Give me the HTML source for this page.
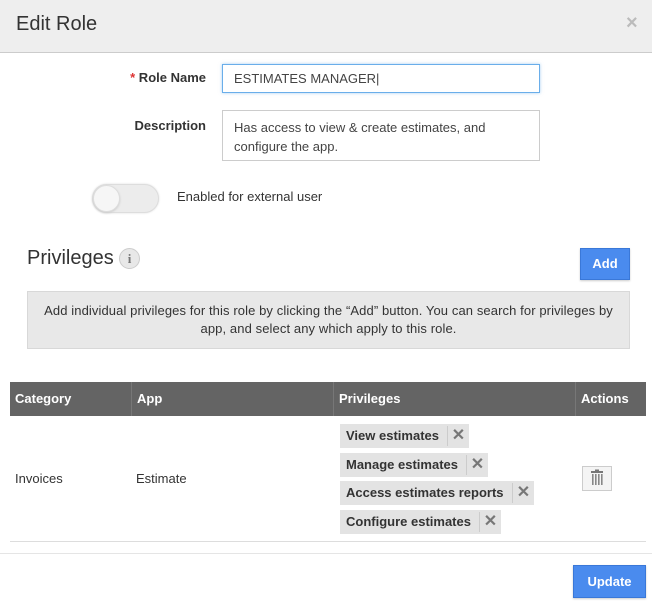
<!DOCTYPE html>
<html><head><meta charset="utf-8"><style>
*{box-sizing:border-box;margin:0;padding:0}
body{width:652px;height:609px;background:#fff;font-family:"Liberation Sans",sans-serif;color:#333;position:relative;overflow:hidden}
.a{position:absolute}
.hdr{left:0;top:0;width:652px;height:53px;background:#eee;border-bottom:1px solid #ccc}
.lbl{font-size:13px;font-weight:bold;color:#333;text-align:right;width:110px;left:96px}
.inp{left:222px;width:318px;border:1px solid #ccc;font-size:13px;padding:0 11px;color:#444}
.btn{background:#4a8bee;border:1px solid #3a78d8;color:#fff;font-weight:bold;font-size:13px;text-align:center;box-shadow:0 1px 2px rgba(0,0,0,.2)}
.th{top:382px;height:34px;background:#646464;color:#fff;font-weight:bold;font-size:13px;line-height:34px;padding-left:5px;border-left:1px solid #777}
.tag{left:340px;height:24px;background:#e3e3e3;font-size:13px;font-weight:bold;line-height:24px;padding-left:6px;color:#333}
.tag span{position:absolute;right:0;top:2px;width:22px;height:20px;border-left:1px solid #ccc;color:#777;font-size:16px;line-height:20px;text-align:center}
</style></head><body>
<div class="a hdr"></div>
<div class="a" style="left:16px;top:13px;font-size:20px;color:#333">Edit Role</div>
<div class="a" style="left:626px;top:12px;font-size:20px;font-weight:bold;color:#bbb">×</div>

<div class="a lbl" style="top:70px"><span style="color:#d33">*</span> Role Name</div>
<div class="a inp" style="top:64px;height:29px;line-height:27px;border-color:#6aaeea;box-shadow:0 0 3px rgba(80,160,230,.5)">ESTIMATES MANAGER|</div>
<div class="a lbl" style="top:118px">Description</div>
<div class="a inp" style="top:110px;height:51px;line-height:19px;padding-top:7px">Has access to view &amp; create estimates, and configure the app.</div>

<div class="a" style="left:92px;top:184px;width:67px;height:29px;border-radius:15px;background:#ececec;border:1px solid #ddd;box-shadow:0 0 2px #ddd"></div>
<div class="a" style="left:93px;top:185px;width:27px;height:27px;border-radius:50%;background:#f6f6f6;border:1px solid #ddd;box-shadow:0 1px 2px #ccc"></div>
<div class="a" style="left:177px;top:189px;font-size:13px">Enabled for external user</div>

<div class="a" style="left:27px;top:247px;font-size:20px">Privileges</div>
<div class="a" style="left:119px;top:248px;width:21px;height:21px;border-radius:50%;background:#e8e8e8;border:1px solid #ccc;color:#777;font-size:13px;font-weight:bold;text-align:center;line-height:19px;font-family:'Liberation Serif',serif">i</div>
<div class="a btn" style="left:580px;top:248px;width:50px;height:32px;line-height:30px">Add</div>
<div class="a" style="left:27px;top:291px;width:603px;height:58px;background:#e8e8e8;border:1px solid #d8d8d8;font-size:13px;text-align:center;line-height:18px;padding:10px 10px 0;color:#333;letter-spacing:0.1px">Add individual privileges for this role by clicking the “Add” button. You can search for privileges by app, and select any which apply to this role.</div>

<div class="a th" style="left:10px;width:121px;border-left:none">Category</div>
<div class="a th" style="left:131px;width:202px">App</div>
<div class="a th" style="left:333px;width:242px">Privileges</div>
<div class="a th" style="left:575px;width:71px">Actions</div>

<div class="a" style="left:15px;top:471px;font-size:13px">Invoices</div>
<div class="a" style="left:136px;top:471px;font-size:13px">Estimate</div>
<div class="a tag" style="top:424px;width:129px">View estimates<span>✕</span></div>
<div class="a tag" style="top:453px;width:148px">Manage estimates<span>✕</span></div>
<div class="a tag" style="top:481px;width:194px">Access estimates reports<span>✕</span></div>
<div class="a tag" style="top:510px;width:161px">Configure estimates<span>✕</span></div>
<div class="a" style="left:582px;top:466px;width:30px;height:25px;background:#f4f4f4;border:1px solid #ccc">
<svg width="28" height="23" viewBox="0 0 28 23"><rect x="8" y="4" width="12" height="2" fill="#777"/><rect x="12" y="2.5" width="4" height="2" fill="#777"/><rect x="9" y="7" width="1.6" height="11" fill="#888"/><rect x="12" y="7" width="1.6" height="11" fill="#888"/><rect x="15" y="7" width="1.6" height="11" fill="#888"/><rect x="18" y="7" width="1.6" height="11" fill="#888"/></svg></div>
<div class="a" style="left:10px;top:541px;width:636px;height:1px;background:#ddd"></div>
<div class="a" style="left:0;top:553px;width:652px;height:1px;background:#e5e5e5"></div>
<div class="a btn" style="left:573px;top:565px;width:73px;height:33px;line-height:31px">Update</div>
</body></html>
